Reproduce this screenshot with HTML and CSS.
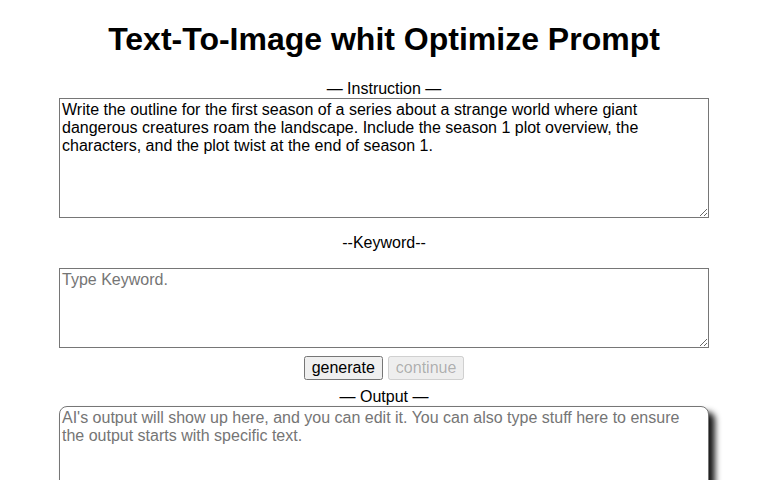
FILE: index.html
```html
<!DOCTYPE html>
<html>
<head>
<meta charset="utf-8">
<title>Text-To-Image whit Optimize Prompt</title>
<link rel="stylesheet" href="styles.css">
</head>
<body>
<main class="page">
  <h1 class="title">Text-To-Image whit Optimize Prompt</h1>
  <label class="label label-instruction" for="instruction">— Instruction —</label>
  <textarea id="instruction" class="field field-instruction">Write the outline for the first season of a series about a strange world where giant dangerous creatures roam the landscape. Include the season 1 plot overview, the characters, and the plot twist at the end of season 1.</textarea>
  <label class="label label-keyword" for="keyword">--Keyword--</label>
  <textarea id="keyword" class="field field-keyword" placeholder="Type Keyword."></textarea>
  <div class="actions">
    <button class="btn" type="button">generate</button>
    <button class="btn" type="button" disabled>continue</button>
  </div>
  <label class="label label-output" for="output">— Output —</label>
  <textarea id="output" class="field field-output" placeholder="AI's output will show up here, and you can edit it. You can also type stuff here to ensure the output starts with specific text."></textarea>
</main>
</body>
</html>
```

FILE: styles.css
```css
html, body {
  margin: 0;
  padding: 0;
  background: #fff;
}

body {
  font-family: "Liberation Sans", Arial, sans-serif;
  color: #000;
  overflow: hidden;
}

.page {
  display: flex;
  flex-direction: column;
  align-items: center;
}

.title {
  font-size: 32px;
  line-height: 37px;
  font-weight: bold;
  margin: 21px 0 22px;
}

.label {
  display: block;
  font-size: 16px;
  line-height: 18px;
  text-align: center;
}

.label-keyword {
  margin-top: 16px;
  margin-bottom: 16px;
}

.label-output {
  margin-top: 8px;
}

.field {
  box-sizing: border-box;
  width: 650px;
  margin: 0;
  padding: 2px;
  border: 1px solid #767676;
  font-family: "Liberation Sans", Arial, sans-serif;
  font-size: 16px;
  line-height: 18px;
  color: #000;
  background: #fff;
}

.field::placeholder {
  color: #757575;
}

.field-instruction {
  height: 120px;
}

.field-keyword {
  height: 80px;
}

.field-output {
  height: 140px;
  border-radius: 8px;
  box-shadow: 6px 6px 6px rgba(0, 0, 0, 0.9);
}

.actions {
  display: flex;
  gap: 5px;
  margin-top: 8px;
}

.btn {
  font-family: "Liberation Sans", Arial, sans-serif;
  font-size: 16px;
}
```
